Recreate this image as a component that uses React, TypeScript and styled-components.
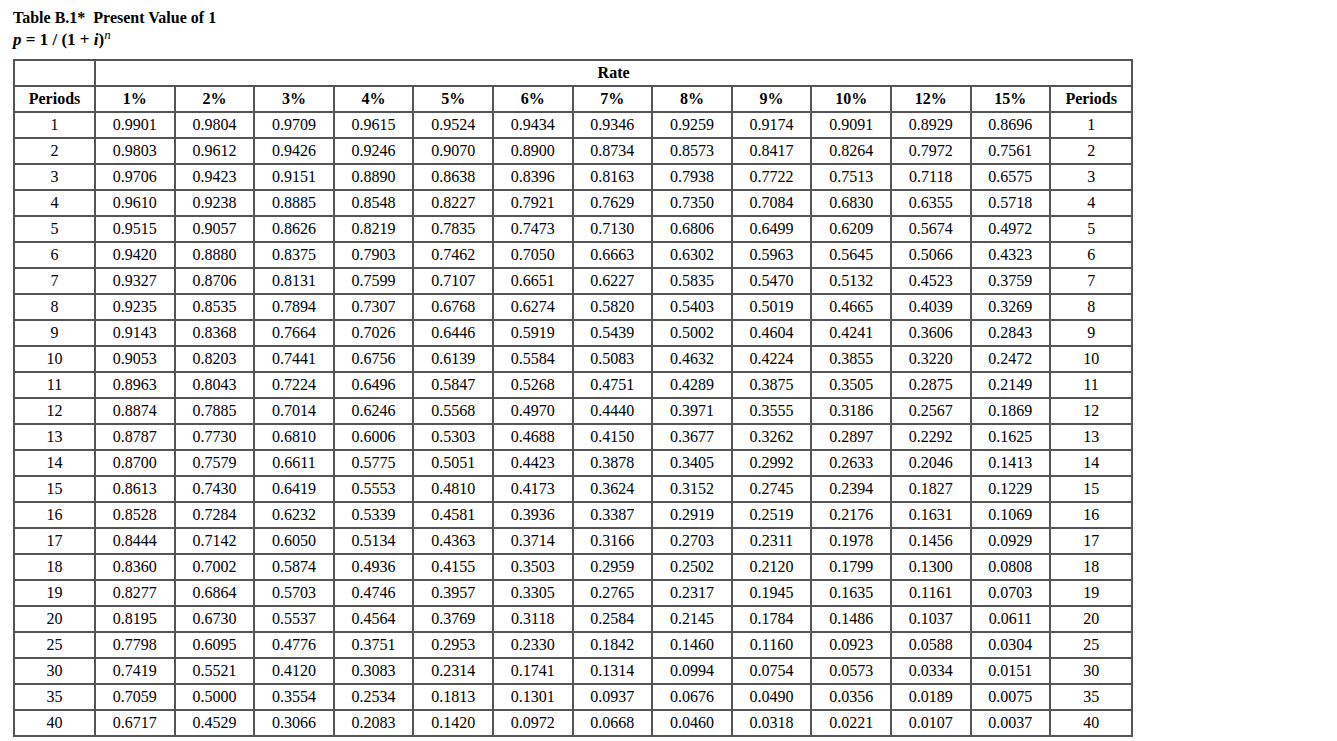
import React from 'react';
import styled, { createGlobalStyle } from 'styled-components';

const GlobalStyle = createGlobalStyle`
  body {
    margin: 0;
    background: #fff;
    color: #000;
    font-family: "Liberation Serif", "Times New Roman", serif;
  }
`;

const Page = styled.div`
  padding: 8px 0 0 13px;
`;

const Title = styled.div`
  font-size: 16px;
  font-weight: bold;
  line-height: 19px;
  white-space: pre;
`;

const Formula = styled.div`
  font-size: 17px;
  font-weight: bold;
  line-height: 20px;
  margin-top: 3px;
  margin-bottom: 9px;

  sup {
    font-size: 13px;
    font-weight: normal;
    line-height: 0;
    vertical-align: 6px;
  }
`;

const Table = styled.table`
  border-collapse: collapse;
  table-layout: fixed;
  width: 1120px;
  border: 2px solid #444;
`;

const Cell = styled.td<{ $head?: boolean }>`
  border: 2px solid #555;
  padding: 0;
  height: 24px;
  line-height: 24px;
  text-align: center;
  font-size: 16px;
  font-weight: ${p => (p.$head ? 'bold' : 'normal')};
`;

const rates = ['1%', '2%', '3%', '4%', '5%', '6%', '7%', '8%', '9%', '10%', '12%', '15%'];

const rows: [number, string][] = [
  [1, '0.9901 0.9804 0.9709 0.9615 0.9524 0.9434 0.9346 0.9259 0.9174 0.9091 0.8929 0.8696'],
  [2, '0.9803 0.9612 0.9426 0.9246 0.9070 0.8900 0.8734 0.8573 0.8417 0.8264 0.7972 0.7561'],
  [3, '0.9706 0.9423 0.9151 0.8890 0.8638 0.8396 0.8163 0.7938 0.7722 0.7513 0.7118 0.6575'],
  [4, '0.9610 0.9238 0.8885 0.8548 0.8227 0.7921 0.7629 0.7350 0.7084 0.6830 0.6355 0.5718'],
  [5, '0.9515 0.9057 0.8626 0.8219 0.7835 0.7473 0.7130 0.6806 0.6499 0.6209 0.5674 0.4972'],
  [6, '0.9420 0.8880 0.8375 0.7903 0.7462 0.7050 0.6663 0.6302 0.5963 0.5645 0.5066 0.4323'],
  [7, '0.9327 0.8706 0.8131 0.7599 0.7107 0.6651 0.6227 0.5835 0.5470 0.5132 0.4523 0.3759'],
  [8, '0.9235 0.8535 0.7894 0.7307 0.6768 0.6274 0.5820 0.5403 0.5019 0.4665 0.4039 0.3269'],
  [9, '0.9143 0.8368 0.7664 0.7026 0.6446 0.5919 0.5439 0.5002 0.4604 0.4241 0.3606 0.2843'],
  [10, '0.9053 0.8203 0.7441 0.6756 0.6139 0.5584 0.5083 0.4632 0.4224 0.3855 0.3220 0.2472'],
  [11, '0.8963 0.8043 0.7224 0.6496 0.5847 0.5268 0.4751 0.4289 0.3875 0.3505 0.2875 0.2149'],
  [12, '0.8874 0.7885 0.7014 0.6246 0.5568 0.4970 0.4440 0.3971 0.3555 0.3186 0.2567 0.1869'],
  [13, '0.8787 0.7730 0.6810 0.6006 0.5303 0.4688 0.4150 0.3677 0.3262 0.2897 0.2292 0.1625'],
  [14, '0.8700 0.7579 0.6611 0.5775 0.5051 0.4423 0.3878 0.3405 0.2992 0.2633 0.2046 0.1413'],
  [15, '0.8613 0.7430 0.6419 0.5553 0.4810 0.4173 0.3624 0.3152 0.2745 0.2394 0.1827 0.1229'],
  [16, '0.8528 0.7284 0.6232 0.5339 0.4581 0.3936 0.3387 0.2919 0.2519 0.2176 0.1631 0.1069'],
  [17, '0.8444 0.7142 0.6050 0.5134 0.4363 0.3714 0.3166 0.2703 0.2311 0.1978 0.1456 0.0929'],
  [18, '0.8360 0.7002 0.5874 0.4936 0.4155 0.3503 0.2959 0.2502 0.2120 0.1799 0.1300 0.0808'],
  [19, '0.8277 0.6864 0.5703 0.4746 0.3957 0.3305 0.2765 0.2317 0.1945 0.1635 0.1161 0.0703'],
  [20, '0.8195 0.6730 0.5537 0.4564 0.3769 0.3118 0.2584 0.2145 0.1784 0.1486 0.1037 0.0611'],
  [25, '0.7798 0.6095 0.4776 0.3751 0.2953 0.2330 0.1842 0.1460 0.1160 0.0923 0.0588 0.0304'],
  [30, '0.7419 0.5521 0.4120 0.3083 0.2314 0.1741 0.1314 0.0994 0.0754 0.0573 0.0334 0.0151'],
  [35, '0.7059 0.5000 0.3554 0.2534 0.1813 0.1301 0.0937 0.0676 0.0490 0.0356 0.0189 0.0075'],
  [40, '0.6717 0.4529 0.3066 0.2083 0.1420 0.0972 0.0668 0.0460 0.0318 0.0221 0.0107 0.0037'],
];

const App: React.FC = () => (
  <Page>
    <GlobalStyle />
    <Title>{'Table B.1*  Present Value of 1'}</Title>
    <Formula>
      <i>p</i> = 1 / (1 + <i>i</i>)<sup><i>n</i></sup>
    </Formula>
    <Table>
      <colgroup>
        <col style={{ width: 81 }} />
        {rates.map(r => (
          <col key={r} style={{ width: 79.6 }} />
        ))}
        <col style={{ width: 82 }} />
      </colgroup>
      <thead>
        <tr>
          <Cell as="th" $head />
          <Cell as="th" $head colSpan={13}>Rate</Cell>
        </tr>
        <tr>
          <Cell as="th" $head>Periods</Cell>
          {rates.map(r => (
            <Cell as="th" $head key={r}>{r}</Cell>
          ))}
          <Cell as="th" $head>Periods</Cell>
        </tr>
      </thead>
      <tbody>
        {rows.map(([n, vals]) => (
          <tr key={n}>
            <Cell>{n}</Cell>
            {vals.split(' ').map((v, i) => (
              <Cell key={i}>{v}</Cell>
            ))}
            <Cell>{n}</Cell>
          </tr>
        ))}
      </tbody>
    </Table>
  </Page>
);

export default App;
